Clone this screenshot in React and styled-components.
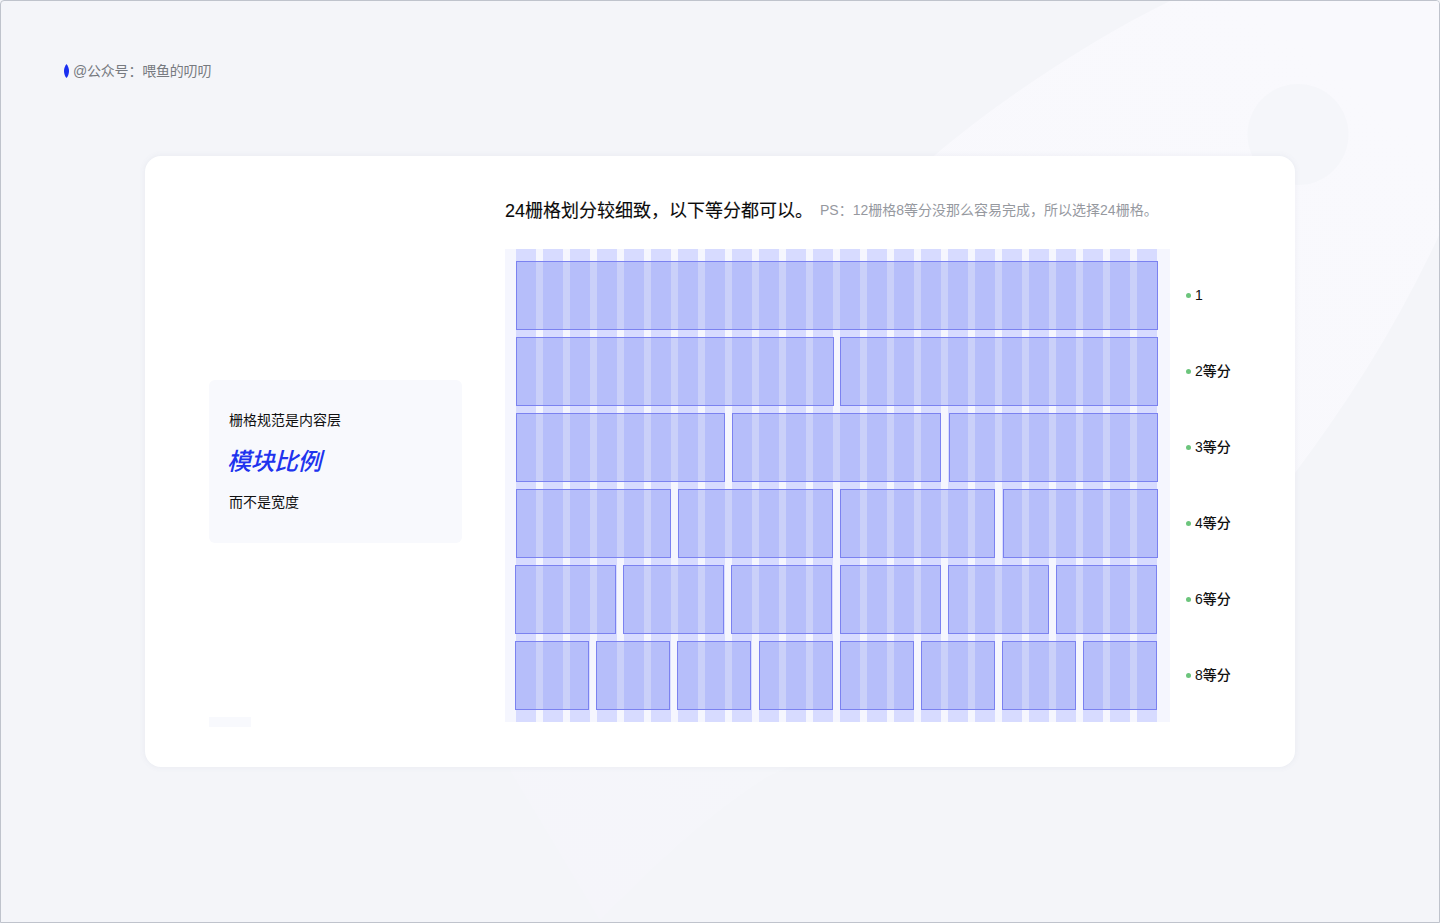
import React from 'react';
import styled, { createGlobalStyle } from 'styled-components';

const GlobalStyle = createGlobalStyle`
  html, body {
    margin: 0;
    padding: 0;
    background: #f4f5f9;
  }
  * {
    box-sizing: border-box;
  }
`;

const Page = styled.div`
  position: relative;
  width: 1440px;
  height: 923px;
  overflow: hidden;
  background: #f4f5f9;
  border: 1px solid #bfc3cc;
  border-radius: 4px 4px 0 0;
  font-family: "Liberation Sans", "Noto Sans CJK SC", sans-serif;
`;

const Backdrop = styled.svg`
  position: absolute;
  top: -1px;
  left: -1px;
`;

const Content = styled.div`
  position: relative;
  padding: 62px 0 0 63px;
`;

const Brand = styled.div`
  display: flex;
  align-items: center;
  gap: 4px;
  height: 16px;
  font-size: 14px;
  line-height: 16px;
  letter-spacing: -0.2px;
  color: #777a80;
`;

const Card = styled.div`
  display: flex;
  gap: 43px;
  width: 1150px;
  height: 611px;
  margin: 77px 0 0 81px;
  padding: 0 0 0 64px;
  background: #fff;
  border-radius: 16px;
  box-shadow: 0 0 6px rgba(90, 100, 140, 0.08);
`;

const Side = styled.div`
  display: flex;
  flex-direction: column;
  width: 253px;
  padding-top: 224px;
`;

const Callout = styled.div`
  display: flex;
  flex-direction: column;
  height: 163px;
  padding: 30px 20px 0;
  background: #f8f9fd;
  border-radius: 6px;
  font-size: 14px;
  line-height: 20px;
  color: #111;
`;

const Highlight = styled.div`
  margin: 14px 0 12px -2px;
  font-size: 24px;
  line-height: 36px;
  letter-spacing: -0.5px;
  font-style: italic;
  font-weight: 500;
  color: #2033ee;
`;

const SideStub = styled.div`
  width: 42px;
  height: 10px;
  margin-top: 174px;
  background: #f8f9fd;
`;

const Main = styled.div`
  display: flex;
  flex-direction: column;
  padding-top: 41px;
`;

const Header = styled.div`
  display: flex;
  align-items: center;
  gap: 7px;
  height: 26px;
  margin-bottom: 26px;
`;

const Title = styled.h2`
  margin: 2px 0 0;
  font-size: 18px;
  line-height: 26px;
  font-weight: 400;
  color: #0b0b0b;
  -webkit-text-stroke: 0.12px #0b0b0b;
`;

const Note = styled.span`
  font-size: 14px;
  line-height: 20px;
  color: #96999f;
`;

const Body = styled.div`
  display: flex;
  gap: 16px;
`;

const Panel = styled.div`
  position: relative;
  width: 665px;
  height: 473px;
  padding: 12px 12px 12px 11px;
  background: #f5f6fe;
`;

const Columns = styled.div`
  position: absolute;
  top: 0;
  bottom: 0;
  left: 11px;
  display: flex;
  gap: 7px;
`;

const Column = styled.div`
  width: 20px;
  background: #d7dbff;
`;

const Rows = styled.div`
  position: relative;
  display: flex;
  flex-direction: column;
  gap: 7px;
`;

const Row = styled.div`
  display: flex;
  gap: ${props => props.$gap}px;
  height: 69px;
  margin-left: ${props => props.$shift}px;
`;

const Block = styled.div`
  flex: none;
  width: ${props => props.$width}px;
  background: rgba(120, 135, 240, 0.34);
  border: 1px solid #7b82f0;
`;

const Labels = styled.div`
  display: flex;
  flex-direction: column;
  gap: 7px;
  padding-top: 12px;
`;

const Label = styled.div`
  display: flex;
  align-items: center;
  gap: 4px;
  height: 69px;
  font-size: 14px;
  line-height: 20px;
  font-weight: 500;
  color: #111;
`;

const LabelText = styled.span`
  padding-bottom: 2px;
`;

const Dot = styled.i`
  display: block;
  width: 5px;
  height: 5px;
  border-radius: 50%;
  background: #6cc57c;
`;

const rows = [
  { count: 1, width: 642, gap: 0, shift: 0, label: '1' },
  { count: 2, width: 318, gap: 6, shift: 0, label: '2等分' },
  { count: 3, width: 209, gap: 7.4, shift: 0, label: '3等分' },
  { count: 4, width: 155, gap: 7.2, shift: 0, label: '4等分' },
  { count: 6, width: 101, gap: 7.2, shift: -1, label: '6等分' },
  { count: 8, width: 74, gap: 7.12, shift: -0.8, label: '8等分' },
];

export default function App() {
  return (
    <>
      <GlobalStyle />
      <Page>
        <Backdrop width="1440" height="923" viewBox="0 0 1440 923">
          <defs>
            <linearGradient id="leaf" gradientUnits="userSpaceOnUse" x1="1300" y1="40" x2="600" y2="920">
              <stop offset="0" stopColor="#f9f9fd" />
              <stop offset="0.55" stopColor="#f8f8fc" />
              <stop offset="0.8" stopColor="#f5f6fa" />
              <stop offset="1" stopColor="#f5f5fa" />
            </linearGradient>
          </defs>
          <path d="M1172 0C1090 40 1000 100 935 155C760 300 500 600 510 770L600 920C650 870 700 820 767 777C960 690 1180 620 1295 473C1350 400 1400 320 1440 233V0Z" fill="url(#leaf)" />
          <circle cx="1298" cy="134.5" r="50.5" fill="#f5f6fa" />
        </Backdrop>
        <Content>
          <Brand>
            <svg width="5" height="14" viewBox="0 0 5 14">
              <path d="M2.5 0C4 1.5 5 4.5 5 7S4 12.5 2.5 14C1 12.5 0 9.5 0 7S1 1.5 2.5 0Z" fill="#1a2ff0" />
            </svg>
            <span>@公众号：喂鱼的叨叨</span>
          </Brand>
          <Card>
            <Side>
              <Callout>
                <div>栅格规范是内容层</div>
                <Highlight>模块比例</Highlight>
                <div>而不是宽度</div>
              </Callout>
              <SideStub />
            </Side>
            <Main>
              <Header>
                <Title>24栅格划分较细致，以下等分都可以。</Title>
                <Note>PS：12栅格8等分没那么容易完成，所以选择24栅格。</Note>
              </Header>
              <Body>
                <Panel>
                  <Columns>
                    {Array.from({ length: 24 }, (_, i) => <Column key={i} />)}
                  </Columns>
                  <Rows>
                    {rows.map(row => (
                      <Row key={row.label} $gap={row.gap} $shift={row.shift}>
                        {Array.from({ length: row.count }, (_, i) => <Block key={i} $width={row.width} />)}
                      </Row>
                    ))}
                  </Rows>
                </Panel>
                <Labels>
                  {rows.map(row => (
                    <Label key={row.label}>
                      <Dot />
                      <LabelText>{row.label}</LabelText>
                    </Label>
                  ))}
                </Labels>
              </Body>
            </Main>
          </Card>
        </Content>
      </Page>
    </>
  );
}
